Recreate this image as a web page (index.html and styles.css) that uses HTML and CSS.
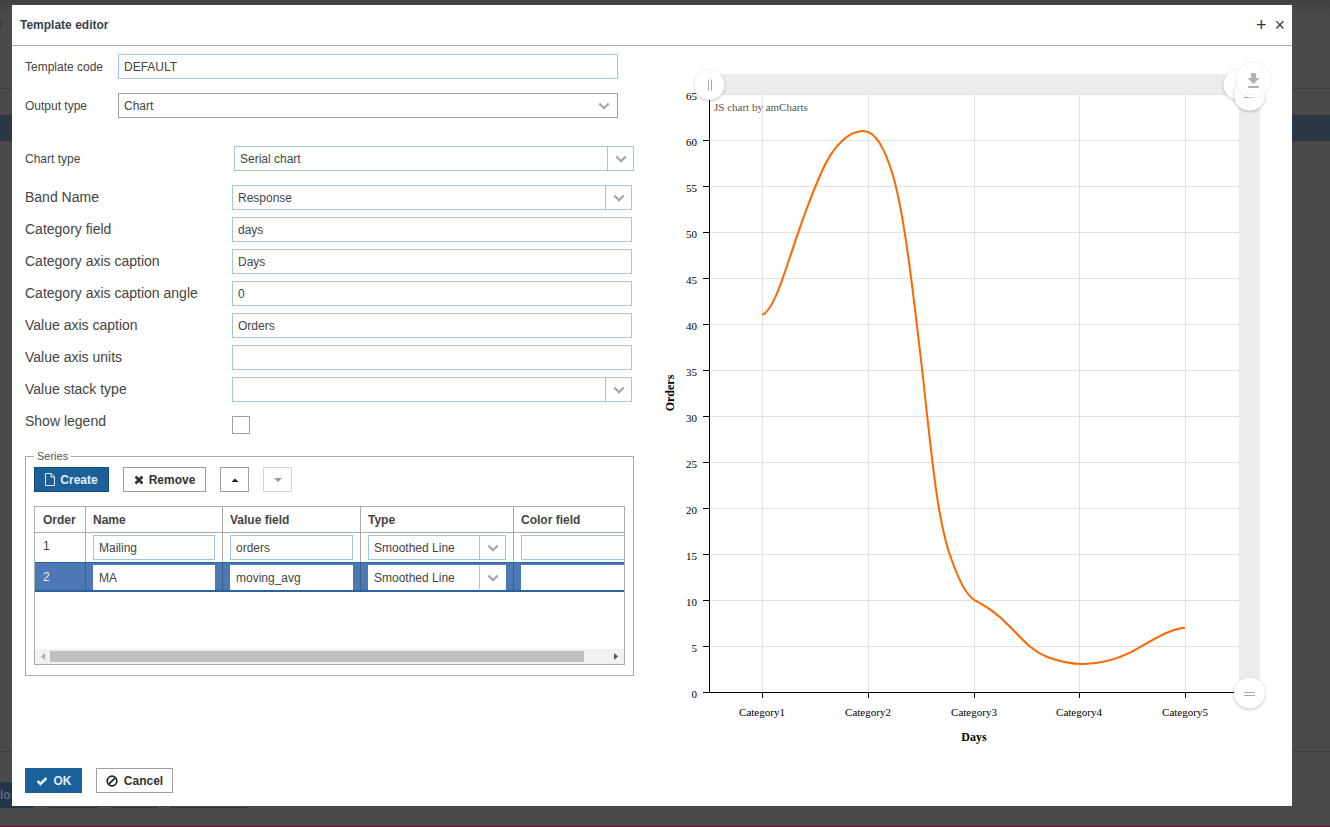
FILE: index.html
```html
<!DOCTYPE html>
<html lang="en">
  <head>
    <meta charset="UTF-8" />
    <title>Template editor</title>
    <link rel="stylesheet" href="styles.css">
  </head>
  <body>
    <!-- page behind the dialog -->
    <div class="backdrop">
      <div class="bd-top"><span class="bd-mark"></span></div>
      <div class="bd-bar"></div>
      <div class="bd-main"></div>
      <div class="bd-foot">
        <span class="bd-tab">los</span>
        <span class="bd-btn bd-w1"></span>
        <span class="bd-btn bd-w2"></span>
        <span class="bd-btn bd-w3"></span>
      </div>
    </div>

    <div class="dialog">
      <div class="dialog-header">
        <div class="dialog-title">Template editor</div>
        <div class="dialog-tools"><span>+</span><span>×</span></div>
      </div>

      <div class="dialog-body">
        <div class="form-col">
          <div class="form-row small first">
            <div class="form-label w-code">Template code</div>
            <div class="field w-500">DEFAULT</div>
          </div>
          <div class="form-row small">
            <div class="form-label w-code">Output type</div>
            <div class="field w-500 grey">Chart<svg class="chev chev-bare" viewBox="0 0 14 9"><polyline points="1.5,1.5 7,7 12.5,1.5" /></svg></div>
          </div>

          <div class="form-row small chart-type">
            <div class="form-label w-type">Chart type</div>
            <div class="field w-400 select">
              <span class="select-text">Serial chart</span>
              <span class="select-btn"><svg class="chev" viewBox="0 0 14 9"><polyline points="1.5,1.5 7,7 12.5,1.5" /></svg></span>
            </div>
          </div>

          <div class="form-row band">
            <div class="form-label w-band">Band Name</div>
            <div class="field w-400 select">
              <span class="select-text">Response</span>
              <span class="select-btn"><svg class="chev" viewBox="0 0 14 9"><polyline points="1.5,1.5 7,7 12.5,1.5" /></svg></span>
            </div>
          </div>
          <div class="form-row band">
            <div class="form-label w-band">Category field</div>
            <div class="field w-400">days</div>
          </div>
          <div class="form-row band">
            <div class="form-label w-band">Category axis caption</div>
            <div class="field w-400">Days</div>
          </div>
          <div class="form-row band">
            <div class="form-label w-band">Category axis caption angle</div>
            <div class="field w-400">0</div>
          </div>
          <div class="form-row band">
            <div class="form-label w-band">Value axis caption</div>
            <div class="field w-400">Orders</div>
          </div>
          <div class="form-row band">
            <div class="form-label w-band">Value axis units</div>
            <div class="field w-400"></div>
          </div>
          <div class="form-row band">
            <div class="form-label w-band">Value stack type</div>
            <div class="field w-400 select">
              <span class="select-text"></span>
              <span class="select-btn"><svg class="chev" viewBox="0 0 14 9"><polyline points="1.5,1.5 7,7 12.5,1.5" /></svg></span>
            </div>
          </div>
          <div class="form-row legend-row">
            <div class="form-label w-band">Show legend</div>
            <div class="checkbox"></div>
          </div>

          <fieldset class="series">
            <legend>Series</legend>
            <div class="toolbar">
              <div class="button primary create">
                <svg class="ico" width="10" height="13" viewBox="0 0 10 13"><path d="M.5.5h5.7L9.5 3.8v8.7H.5zM6 .5v3.5h3.5" /></svg>Create
              </div>
              <div class="button remove">
                <svg class="ico" width="10" height="10" viewBox="0 0 10 10"><path class="ico-x" d="M1.5 1.5l7 7M8.5 1.5l-7 7" /></svg>Remove
              </div>
              <div class="button arrow">
                <svg width="8" height="4" viewBox="0 0 8 4"><polygon class="ico-fill" points="0.500,4 4,0.500 7.500,4" /></svg>
              </div>
              <div class="button arrow off">
                <svg width="8" height="4" viewBox="0 0 8 4"><polygon class="ico-fill" points="0,0 8,0 4,4" /></svg>
              </div>
            </div>

            <div class="grid">
              <div class="grid-scroll">
                <table>
                  <colgroup>
                    <col class="c-order" /><col class="c-name" /><col class="c-value" /><col class="c-type" /><col class="c-color" />
                  </colgroup>
                  <thead>
                    <tr>
                      <th>Order</th>
                      <th>Name</th>
                      <th>Value field</th>
                      <th>Type</th>
                      <th>Color field</th>
                    </tr>
                  </thead>
                  <tbody>
                    <tr>
                      <td class="order">1</td>
                      <td><div class="field">Mailing</div></td>
                      <td><div class="field">orders</div></td>
                      <td>
                        <div class="field select">
                          <span class="select-text">Smoothed Line</span>
                          <span class="select-btn"><svg class="chev" viewBox="0 0 14 9"><polyline points="1.5,1.5 7,7 12.5,1.5" /></svg></span>
                        </div>
                      </td>
                      <td><div class="field"></div></td>
                    </tr>
                    <tr class="selected">
                      <td class="order">2</td>
                      <td><div class="field">MA</div></td>
                      <td><div class="field">moving_avg</div></td>
                      <td>
                        <div class="field select">
                          <span class="select-text">Smoothed Line</span>
                          <span class="select-btn"><svg class="chev" viewBox="0 0 14 9"><polyline points="1.5,1.5 7,7 12.5,1.5" /></svg></span>
                        </div>
                      </td>
                      <td><div class="field"></div></td>
                    </tr>
                  </tbody>
                </table>
              </div>
              <div class="hscroll">
                <svg class="hs-arrow" width="4" height="7" viewBox="0 0 4 7"><polygon class="hs-left" points="4,0 4,7 0,3.5" /></svg>
                <div class="hs-track"><div class="hs-thumb"></div></div>
                <svg class="hs-arrow" width="4" height="7" viewBox="0 0 4 7"><polygon class="hs-right" points="0,0 0,7 4,3.5" /></svg>
              </div>
            </div>
          </fieldset>
        </div>

        <div class="chart-col">
          <svg class="chart" width="642" height="714" viewBox="650 46 642 714">
            <!-- scrollbars -->
            <rect class="scroll-bg" x="709" y="74" width="530" height="21" />
            <rect class="scroll-bg" x="1239" y="95" width="21" height="597" />

            <!-- grid -->
            <g class="grid-line">
              <line x1="709" x2="1239" y1="94.5" y2="94.5" />
              <line x1="709" x2="1239" y1="140.5" y2="140.5" />
              <line x1="709" x2="1239" y1="186.5" y2="186.5" />
              <line x1="709" x2="1239" y1="232.5" y2="232.5" />
              <line x1="709" x2="1239" y1="278.5" y2="278.5" />
              <line x1="709" x2="1239" y1="324.5" y2="324.5" />
              <line x1="709" x2="1239" y1="370.5" y2="370.5" />
              <line x1="709" x2="1239" y1="416.5" y2="416.5" />
              <line x1="709" x2="1239" y1="462.5" y2="462.5" />
              <line x1="709" x2="1239" y1="508.5" y2="508.5" />
              <line x1="709" x2="1239" y1="554.5" y2="554.5" />
              <line x1="709" x2="1239" y1="600.5" y2="600.5" />
              <line x1="709" x2="1239" y1="646.5" y2="646.5" />
              <line x1="762.5" x2="762.5" y1="95" y2="692" />
              <line x1="868.5" x2="868.5" y1="95" y2="692" />
              <line x1="974.5" x2="974.5" y1="95" y2="692" />
              <line x1="1079.5" x2="1079.5" y1="95" y2="692" />
              <line x1="1185.5" x2="1185.5" y1="95" y2="692" />
            </g>

            <!-- axes -->
            <g class="axis-line">
              <line x1="709.5" x2="709.5" y1="95" y2="693" />
              <line x1="703" x2="1239" y1="692.5" y2="692.5" />
              <line x1="703" x2="709" y1="94.5" y2="94.5" />
              <line x1="703" x2="709" y1="140.5" y2="140.5" />
              <line x1="703" x2="709" y1="186.5" y2="186.5" />
              <line x1="703" x2="709" y1="232.5" y2="232.5" />
              <line x1="703" x2="709" y1="278.5" y2="278.5" />
              <line x1="703" x2="709" y1="324.5" y2="324.5" />
              <line x1="703" x2="709" y1="370.5" y2="370.5" />
              <line x1="703" x2="709" y1="416.5" y2="416.5" />
              <line x1="703" x2="709" y1="462.5" y2="462.5" />
              <line x1="703" x2="709" y1="508.5" y2="508.5" />
              <line x1="703" x2="709" y1="554.5" y2="554.5" />
              <line x1="703" x2="709" y1="600.5" y2="600.5" />
              <line x1="703" x2="709" y1="646.5" y2="646.5" />
              <line x1="762.5" x2="762.5" y1="692" y2="698" />
              <line x1="868.5" x2="868.5" y1="692" y2="698" />
              <line x1="974.5" x2="974.5" y1="692" y2="698" />
              <line x1="1079.5" x2="1079.5" y1="692" y2="698" />
              <line x1="1185.5" x2="1185.5" y1="692" y2="698" />
            </g>

            <path class="series-line" d="M762.3 314.7C770 312 777 295 783.3 276.7C794 246 806 205 823.3 168.3C833 147 848 131 863.3 131C875 131 885 148 893.3 176.7C905 217 914 300 923.3 380C932 460 938 525 951.7 560C958 578 965 594 974.3 600C985 606 996 612 1010 626.7C1023 640 1032 651 1046.7 656.7C1058 661 1070 664 1083.3 664C1100 664 1115 660 1130 652.7C1150 642 1168 629 1185 627.7" />

            <!-- labels -->
            <g class="tick-y">
              <text x="697" y="100">65</text>
              <text x="697" y="146">60</text>
              <text x="697" y="192">55</text>
              <text x="697" y="238">50</text>
              <text x="697" y="284">45</text>
              <text x="697" y="330">40</text>
              <text x="697" y="376">35</text>
              <text x="697" y="422">30</text>
              <text x="697" y="468">25</text>
              <text x="697" y="514">20</text>
              <text x="697" y="560">15</text>
              <text x="697" y="606">10</text>
              <text x="697" y="652">5</text>
              <text x="697" y="698">0</text>
            </g>
            <g class="tick-x">
              <text x="762" y="716">Category1</text>
              <text x="868" y="716">Category2</text>
              <text x="974" y="716">Category3</text>
              <text x="1079" y="716">Category4</text>
              <text x="1185" y="716">Category5</text>
            </g>
            <text class="axis-title" x="974" y="741">Days</text>
            <text class="axis-title" transform="translate(674 393) rotate(-90)">Orders</text>
            <text class="credit" x="714" y="111">JS chart by amCharts</text>

            <!-- scrollbar grips and export button -->
            <circle class="grip" cx="709.5" cy="85" r="15" />
            <line class="grip-mark" x1="708.5" x2="708.5" y1="79.5" y2="90.5" />
            <line class="grip-mark" x1="711.5" x2="711.5" y1="79.5" y2="90.5" />
            <circle class="grip" cx="1238.5" cy="85" r="15" />
            <line class="grip-mark" x1="1237.5" x2="1237.5" y1="79.5" y2="90.5" />
            <circle class="grip" cx="1249.5" cy="95" r="15.5" />
            <line class="grip-mark" x1="1244" x2="1255" y1="94.5" y2="94.5" />
            <line class="grip-mark" x1="1244" x2="1255" y1="97.5" y2="97.5" />
            <circle class="grip" cx="1249.5" cy="693" r="15.5" />
            <line class="grip-mark" x1="1244" x2="1255" y1="692.5" y2="692.5" />
            <line class="grip-mark" x1="1244" x2="1255" y1="695.5" y2="695.5" />
            <circle class="export" cx="1253.5" cy="80" r="18" />
            <path class="export-ico" d="M1251 73h5v5h3.500l-6 6-6-6h3.500zM1248 86h11v2h-11z" />
          </svg>
        </div>
      </div>

      <div class="dialog-footer">
        <div class="button primary ok">
          <svg class="ico" width="12" height="10" viewBox="0 0 12 10"><polyline class="ico-check" points="1.500,5 4.500,8 10.500,2" /></svg>OK
        </div>
        <div class="button cancel">
          <svg class="ico" width="12" height="12" viewBox="0 0 12 12"><circle class="ico-ban" cx="6" cy="6" r="4.800" /><line class="ico-ban" x1="2.800" y1="9.200" x2="9.200" y2="2.800" /></svg>Cancel
        </div>
      </div>
    </div>
  </body>
</html>
```

FILE: styles.css
```css
html,
body {
  width: 100%;
  height: 100%;
  margin: 0;
  overflow: hidden;
  background-color: #4a4a4a;
  font-family: "Liberation Sans", Arial, sans-serif;
  font-size: 12px;
  color: #444;
}

/* page behind the dialog */
.backdrop {
  height: 100%;
  display: flex;
  flex-flow: column;
  box-sizing: border-box;
  border-bottom: 1px solid #5e0f3a;
}
.bd-top {
  height: 89px;
  flex: none;
  box-sizing: border-box;
  border-bottom: 1px solid #3c3c3c;
  background: linear-gradient(#414141, #4a4a4a 20%);
  padding-top: 20px;
}
.bd-mark {
  display: block;
  width: 2px;
  height: 7px;
  background-color: #33404d;
}
.bd-bar {
  height: 26px;
  flex: none;
  margin-top: 26px;
  background-color: #2b3744;
}
.bd-main {
  flex: auto;
  border-bottom: 1px solid #3c3c3c;
}
.bd-foot {
  height: 74px;
  flex: none;
  display: flex;
  align-items: flex-start;
  gap: 14px;
  padding-top: 30px;
  box-sizing: border-box;
}
.bd-tab {
  width: 34px;
  height: 26px;
  line-height: 27px;
  background-color: #22364a;
  color: #5a6b7a;
  font-weight: bold;
}
.bd-btn {
  height: 26px;
  box-sizing: border-box;
  border: 1px solid #333;
}
.bd-w1 {
  width: 50px;
}
.bd-w2 {
  width: 45px;
}
.bd-w3 {
  width: 77px;
}

/* dialog */
.dialog {
  position: fixed;
  top: 5px;
  left: 12px;
  width: 1280px;
  height: 801px;
  background-color: #fff;
  display: flex;
  flex-flow: column;
}
.dialog-header {
  height: 41px;
  flex: none;
  box-sizing: border-box;
  border-bottom: 1px solid #aaa;
  display: flex;
  align-items: center;
  justify-content: space-between;
  padding: 0 7px 0 8px;
}
.dialog-title {
  font-weight: bold;
  color: #38424c;
}
.dialog-tools {
  display: flex;
  gap: 8px;
  font-size: 18px;
  color: #2b3a4a;
}
.dialog-body {
  flex: auto;
  min-height: 0;
  display: flex;
}
.form-col {
  width: 638px;
  flex: none;
  box-sizing: border-box;
  padding: 8px 0 0 13px;
}
.chart-col {
  flex: auto;
}
.chart {
  display: block;
}

/* form */
.form-row {
  display: flex;
  align-items: center;
  font-size: 14px;
}
.form-row.small {
  font-size: 12px;
  margin-bottom: 14px;
}
.form-row.chart-type {
  margin-top: 28px;
}
.form-row.band {
  margin-bottom: 7px;
}
.form-row.band .form-label {
  margin-bottom: 2px;
}
.form-row.legend-row {
  margin-top: 13px;
  align-items: flex-start;
}
.form-row.legend-row .form-label {
  line-height: 12px;
}
.w-code {
  width: 93px;
}
.w-type {
  width: 209px;
}
.w-band {
  width: 207px;
  white-space: nowrap;
}
.w-500 {
  width: 500px;
}
.w-400 {
  width: 400px;
}
.field {
  height: 25px;
  line-height: 25px;
  box-sizing: border-box;
  border: 1px solid #a3c4df;
  padding: 0 5px;
  background-color: #fff;
  font-size: 12px;
  color: #444;
  white-space: nowrap;
  position: relative;
}
.field.grey {
  border-color: #a0a0a0;
}
.field.select {
  display: flex;
  padding: 0 0 0 5px;
}
.select-text {
  flex: auto;
}
.select-btn {
  width: 26px;
  flex: none;
  box-sizing: border-box;
  border-left: 1px solid #a3c4df;
  display: flex;
  align-items: center;
  justify-content: center;
}
.chev {
  width: 12px;
  height: 8px;
  fill: none;
  stroke: #a8a8a8;
  stroke-width: 2.6;
}
.chev-bare {
  position: absolute;
  top: 8px;
  right: 7px;
}
.checkbox {
  width: 18px;
  height: 18px;
  margin-top: 1px;
  box-sizing: border-box;
  border: 1px solid #a0a0a0;
}

/* series */
.series {
  width: 609px;
  height: 226px;
  box-sizing: border-box;
  margin: 16px 0 0;
  padding: 4px 8px 0;
  border: 1px solid #aaa;
  min-width: 0;
}
.series legend {
  margin-left: 0;
  padding: 0 3px;
  font-size: 11px;
  line-height: 13px;
  color: #555;
}
.toolbar {
  display: flex;
}
.button {
  height: 25px;
  box-sizing: border-box;
  border: 1px solid #a0a0a0;
  background-color: #fff;
  display: flex;
  align-items: center;
  justify-content: center;
  gap: 5px;
  padding: 0;
  font-weight: bold;
  color: #333;
}
.button.primary {
  background-color: #1b6098;
  border-color: #14497a;
  color: #e4edf5;
}
.button.create {
  width: 75px;
  margin-right: 14px;
}
.button.remove {
  width: 83px;
  margin-right: 14px;
}
.button.arrow {
  width: 29px;
  margin-right: 14px;
}
.button.off {
  border-color: #d4d4d4;
}
.button.off .ico-fill {
  fill: #999;
}
.ico {
  flex: none;
}
.ico path {
  fill: none;
  stroke: #e4edf5;
  stroke-width: 1;
}
.ico path.ico-x {
  stroke: #333;
  stroke-width: 2.6;
}
.ico-fill {
  fill: #222;
}
.ico-check {
  fill: none;
  stroke: #e4edf5;
  stroke-width: 2.600;
}
.ico-ban {
  fill: none;
  stroke: #222;
  stroke-width: 1.700;
}

/* grid */
.grid {
  width: 591px;
  height: 159px;
  box-sizing: border-box;
  margin-top: 14px;
  border: 1px solid #aaa;
  display: flex;
  flex-flow: column;
  overflow: hidden;
}
.grid-scroll {
  flex: auto;
  overflow: hidden;
}
table {
  width: 700px;
  table-layout: fixed;
  border-collapse: separate;
  border-spacing: 0;
}
.c-order {
  width: 51px;
}
.c-name {
  width: 137px;
}
.c-value {
  width: 138px;
}
.c-type {
  width: 153px;
}
.c-color {
  width: 221px;
}
th {
  height: 25px;
  padding: 0 7px;
  text-align: left;
  font-weight: bold;
  color: #444;
  border-right: 1px solid #aaa;
  border-bottom: 1px solid #aaa;
}
th:first-child {
  padding: 0 8px;
}
td {
  padding: 2px 7px;
  border-right: 1px solid #aaa;
  vertical-align: top;
}
td .field {
  width: 100%;
}
td.order {
  padding: 6px 8px 0;
  line-height: 14px;
}
tr.selected td {
  padding-top: 2px;
  padding-bottom: 0;
  background-color: #4c79b3;
  border-top: 1px solid #2d62a0;
  border-bottom: 2px solid #2d62a0;
  border-right-color: #3c5f8c;
  color: #e4edf5;
}
tr.selected td.order {
  padding-top: 7px;
}
tr.selected td .field {
  border-color: #fff;
}
tr.selected .select-btn {
  border-left-color: #a3c4df;
}
.hscroll {
  height: 15px;
  flex: none;
  background-color: #f1f1f1;
  display: flex;
  align-items: center;
  padding: 0 6px;
  gap: 5px;
}
.hs-arrow {
  flex: none;
}
.hs-left {
  fill: #aaa;
}
.hs-right {
  fill: #555;
}
.hs-track {
  flex: auto;
}
.hs-thumb {
  width: 534px;
  height: 11px;
  background-color: #bfbfbf;
}

/* chart */
.scroll-bg {
  fill: #ececec;
}
.grid-line line {
  stroke: #e2e2e2;
  stroke-width: 1;
}
.axis-line line {
  stroke: #000;
  stroke-width: 1;
}
.series-line {
  fill: none;
  stroke: #ff6600;
  stroke-width: 2;
}
.tick-y text,
.tick-x text,
.credit,
.axis-title {
  font-family: "Liberation Serif", "Times New Roman", serif;
  font-size: 11px;
  fill: #000;
}
.tick-y text {
  text-anchor: end;
}
.tick-x text,
.axis-title {
  text-anchor: middle;
}
.axis-title {
  font-size: 12px;
  font-weight: bold;
}
.credit {
  fill: #555;
}
.grip {
  fill: #fff;
  filter: drop-shadow(0 1px 1.5px rgba(0, 0, 0, 0.25));
}
.export {
  fill: rgba(255, 255, 255, 0.85);
  stroke: rgba(0, 0, 0, 0.07);
  stroke-width: 1;
}
.grip-mark {
  stroke: #a8a8a8;
  stroke-width: 1;
}
.export-ico {
  fill: #b0b0b0;
}

.dialog-footer {
  height: 38px;
  flex: none;
  display: flex;
  gap: 14px;
  padding-left: 13px;
}
.dialog-footer .button {
  gap: 6px;
}
.dialog-footer .ok {
  width: 57px;
  border: none;
}
.dialog-footer .cancel {
  width: 77px;
}
```
